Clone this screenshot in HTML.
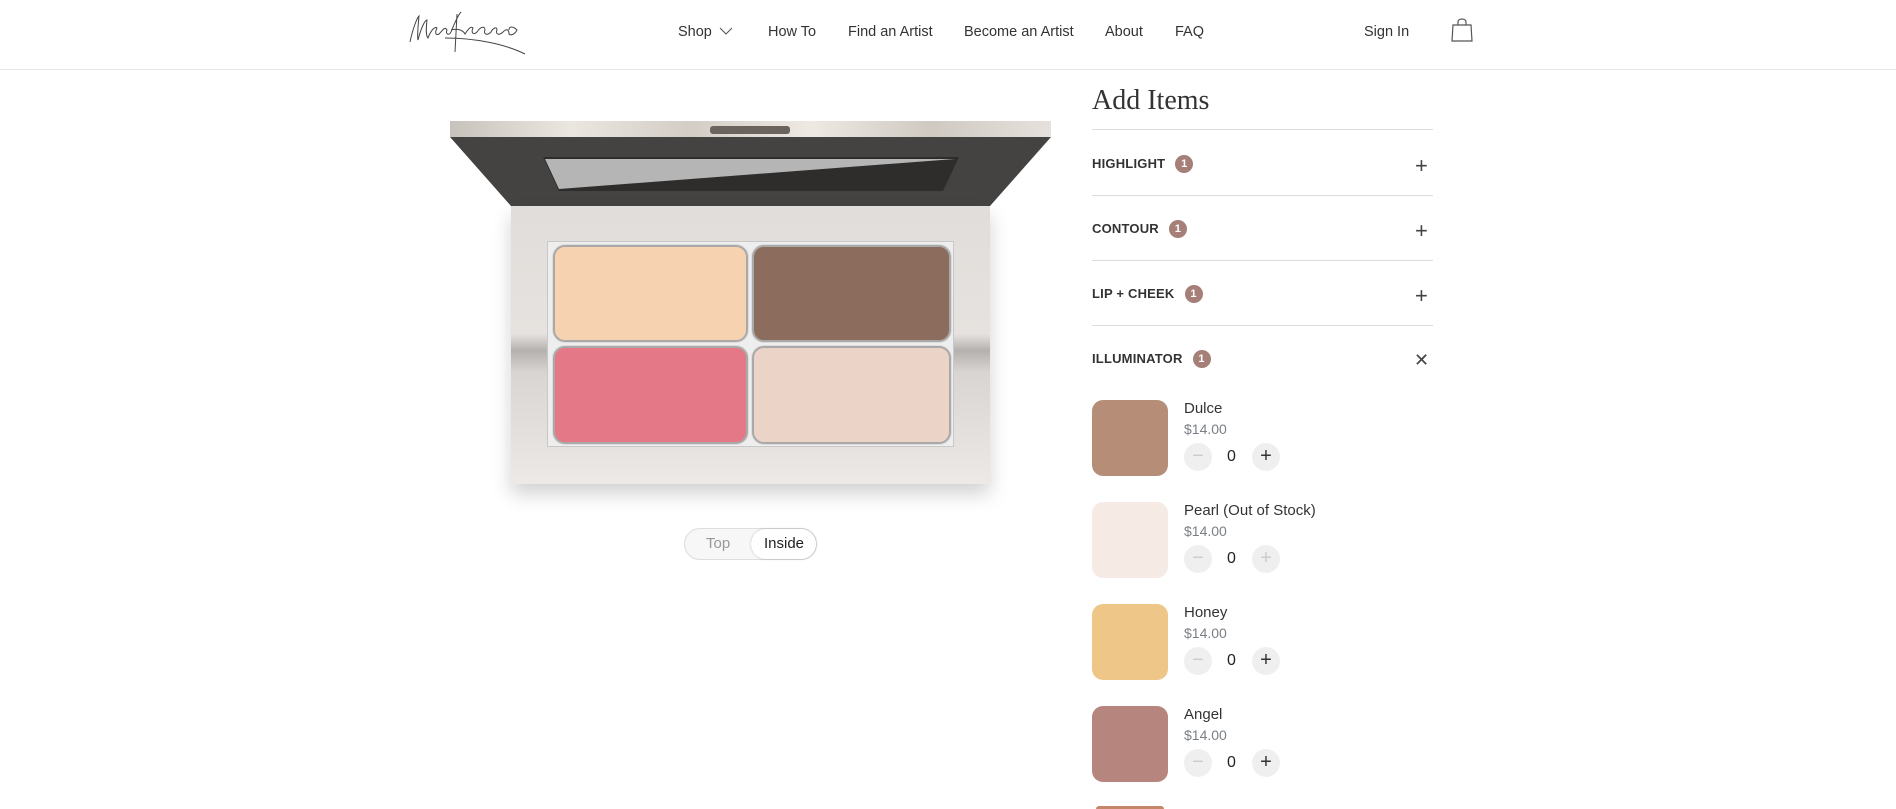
<!DOCTYPE html>
<html style="overflow:hidden;height:809px"><head><meta charset="utf-8"><style>
*{margin:0;padding:0;box-sizing:border-box}
body{width:1896px;height:809px;overflow:hidden;background:#fff;font-family:"Liberation Sans",Arial,sans-serif;color:#333;position:relative}
.a{position:absolute}
.nav{font-size:14.5px;color:#333;top:24px;white-space:nowrap}
.hl{left:1092px;width:341px;height:1px;background:#dcdcdc}
.lab{left:1092px;font-size:13px;font-weight:bold;color:#333;letter-spacing:.2px;white-space:nowrap}
.badge{display:inline-block;width:18px;height:18px;border-radius:9px;background:#a67f78;color:#fff;font-size:11px;text-align:center;line-height:18px;margin-left:10px;vertical-align:1px}
.pl{left:1415px;font-size:22px;font-weight:300;color:#444;line-height:20px}
.sw{left:1092px;width:76px;height:76px;border-radius:11px}
.nm{left:1184px;font-size:15px;color:#333}
.pr{left:1184px;font-size:14px;color:#7a7f85}
.c{width:28px;height:28px;border-radius:14px;background:#efefef;text-align:center;line-height:27px;font-size:20px}
.q{font-size:16px;color:#222;left:1227px}
.pan{border-radius:12px;border:2px solid #a9a9a9;box-shadow:0 0 0 1px #ddd}
</style></head><body>
<div class="a" style="left:0;top:69px;width:1896px;height:1px;background:#e6e6e6"></div>
<svg class="a" style="left:405px;top:8px" width="130" height="48" viewBox="0 0 130 48" fill="none" stroke="#444" stroke-width="1">
<path d="M5 34 C8 20 12 10 14 8 C13 18 12 28 13 32 C16 20 20 12 22 12 C21 20 21 28 23 30 C26 22 30 18 32 20 C30 24 30 28 34 26 C38 22 40 18 42 22 C40 26 44 28 46 24"/>
<path d="M46 24 C50 14 54 6 56 4 M52 6 L50 44 M46 22 C52 20 58 22 60 26 C64 20 66 18 68 20 C66 24 68 28 72 24 C76 18 80 18 80 22 C78 26 82 28 86 24 C88 20 92 18 92 22 C90 26 94 28 98 24 C102 20 104 22 104 26 C106 28 110 26 112 22 C108 18 104 18 104 22"/>
<path d="M40 30 C70 30 100 36 120 46"/>
</svg>
<div class="a nav" style="left:678px">Shop <svg width="14" height="10" viewBox="0 0 14 10" style="margin-left:3px"><path d="M1 2 L7 8 L13 2" fill="none" stroke="#555" stroke-width="1.1"/></svg></div>
<div class="a nav" style="left:768px">How To</div>
<div class="a nav" style="left:848px">Find an Artist</div>
<div class="a nav" style="left:964px">Become an Artist</div>
<div class="a nav" style="left:1105px">About</div>
<div class="a nav" style="left:1175px">FAQ</div>
<div class="a nav" style="left:1364px">Sign In</div>
<svg class="a" style="left:1450px;top:17px" width="24" height="26" viewBox="0 0 24 26" fill="none" stroke="#555" stroke-width="1.2"><path d="M3 8 H21 L22 24 H2 Z"/><path d="M8 8 V5 C8 1 16 1 16 5 V8"/></svg>

<div class="a" style="left:450px;top:121px;width:601px;height:16px;background:linear-gradient(90deg,#c8c2bc,#ebe6e0 20%,#d3cdc6 40%,#eee9e3 60%,#cfc9c2 80%,#e6e1dc);"></div>
<div class="a" style="left:710px;top:126px;width:80px;height:8px;background:#6b645e;border-radius:3px"></div>
<svg class="a" style="left:450px;top:137px" width="601" height="70" viewBox="0 0 601 70"><polygon points="0,0 601,0 540,69 61,69" fill="#454341"/><polygon points="93,20 509,20 493,54 109,54" fill="#2e2d2c"/><polygon points="95,22 505,22 109,52" fill="#b5b5b5"/></svg>
<div class="a" style="left:511px;top:206px;width:479px;height:278px;background:linear-gradient(180deg,#e0ddda 0%,#e6e2df 46%,#b5b1ae 52%,#d8d5d3 60%,#ece9e7 100%);box-shadow:0 10px 18px rgba(0,0,0,.18)"></div>
<div class="a" style="left:547px;top:241px;width:407px;height:206px;background:#eeeeee;border:1px solid #c8c8c8"></div>
<div class="a pan" style="left:553px;top:245px;width:195px;height:97px;background:#f7d2b1"></div>
<div class="a pan" style="left:752px;top:245px;width:199px;height:97px;background:#8c6c5c"></div>
<div class="a pan" style="left:553px;top:346px;width:195px;height:98px;background:#e47886"></div>
<div class="a pan" style="left:752px;top:346px;width:199px;height:98px;background:#ecd3c8"></div>
<div class="a" style="left:684px;top:528px;width:133px;height:32px;border-radius:16px;background:#f7f7f7;border:1px solid #ddd"></div>
<div class="a" style="left:751px;top:529px;width:65px;height:30px;border-radius:15px;background:#fff;box-shadow:0 0 2px rgba(0,0,0,.25)"></div>
<div class="a" style="left:706px;top:535px;font-size:15px;color:#999">Top</div>
<div class="a" style="left:764px;top:535px;font-size:15px;color:#222">Inside</div>

<div class="a" style="left:1092px;top:85px;font-family:'Liberation Serif',serif;font-size:28px;color:#333">Add Items</div>
<div class="a hl" style="top:129px"></div>
<div class="a hl" style="top:195px"></div>
<div class="a hl" style="top:260px"></div>
<div class="a hl" style="top:325px"></div>
<div class="a lab" style="top:155px">HIGHLIGHT<span class="badge">1</span></div>
<div class="a lab" style="top:220px">CONTOUR<span class="badge">1</span></div>
<div class="a lab" style="top:285px">LIP + CHEEK<span class="badge">1</span></div>
<div class="a lab" style="top:350px">ILLUMINATOR<span class="badge">1</span></div>
<div class="a pl" style="top:156px">+</div>
<div class="a pl" style="top:221px">+</div>
<div class="a pl" style="top:286px">+</div>
<div class="a pl" style="top:350px;font-size:18px;left:1414px">✕</div>

<div class="a sw" style="top:400px;background:#b68e78"></div>
<div class="a nm" style="top:400px">Dulce</div><div class="a pr" style="top:421px">$14.00</div>
<div class="a c" style="left:1184px;top:443px;color:#ccc">−</div><div class="a q" style="top:448px">0</div><div class="a c" style="left:1252px;top:443px;color:#333">+</div>

<div class="a sw" style="top:502px;background:#f5ebe4"></div>
<div class="a nm" style="top:502px">Pearl (Out of Stock)</div><div class="a pr" style="top:523px">$14.00</div>
<div class="a c" style="left:1184px;top:545px;color:#ccc">−</div><div class="a q" style="top:550px">0</div><div class="a c" style="left:1252px;top:545px;color:#ccc">+</div>

<div class="a sw" style="top:604px;background:#eec687"></div>
<div class="a nm" style="top:604px">Honey</div><div class="a pr" style="top:625px">$14.00</div>
<div class="a c" style="left:1184px;top:647px;color:#ccc">−</div><div class="a q" style="top:652px">0</div><div class="a c" style="left:1252px;top:647px;color:#333">+</div>

<div class="a sw" style="top:706px;background:#b6857d"></div>
<div class="a nm" style="top:706px">Angel</div><div class="a pr" style="top:727px">$14.00</div>
<div class="a c" style="left:1184px;top:749px;color:#ccc">−</div><div class="a q" style="top:754px">0</div><div class="a c" style="left:1252px;top:749px;color:#333">+</div>

<div class="a" style="left:1096px;top:806px;width:68px;height:3px;background:#c4876a;border-radius:3px 3px 0 0"></div>
</body></html>
